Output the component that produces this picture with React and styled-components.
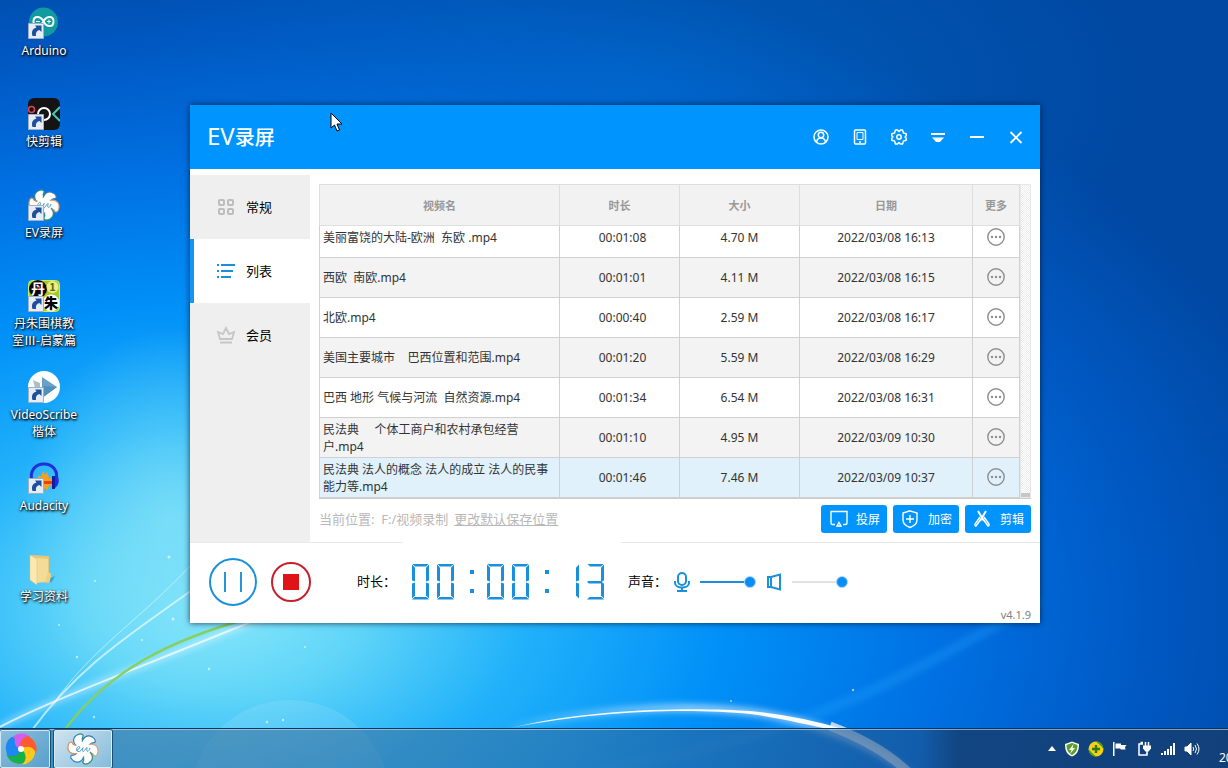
import { useLayoutEffect, useRef } from "react";
import styled, { createGlobalStyle } from "styled-components";

const GlobalStyle = createGlobalStyle`
  * {
    box-sizing: border-box;
  }
  body {
    margin: 0;
    font-family: "Noto Sans", "Noto Sans CJK SC", sans-serif;
    font-size: 12px;
    line-height: 17px;
  }
  button {
    font: inherit;
    padding: 0;
    border: 0;
    background: transparent;
    cursor: pointer;
  }
  svg {
    display: block;
    flex: none;
    text-shadow: none;
  }
`;

//// PLOCHA
const Screen = styled.div`
  position: relative;
  display: flex;
  flex-direction: column;
  min-height: 100vh;
  overflow: hidden;
  background: radial-gradient(
      ellipse 520px 260px at 640px 90px,
      rgba(0, 130, 230, 0.35),
      rgba(0, 130, 230, 0)
    ),
    radial-gradient(
      ellipse 150px 190px at 170px 520px,
      rgba(130, 225, 248, 0.75),
      rgba(130, 225, 248, 0)
    ),
    radial-gradient(
      ellipse 1120px 680px at 220px 610px,
      #84e6fb 0%,
      #62d6f8 12%,
      #22b2fa 27%,
      #0090f8 45%,
      #0070e2 65%,
      #0058c2 83%,
      #0048a2 100%
    );
`;

const Wallpaper = styled.svg`
  position: absolute;
  inset: 0;
  width: 100%;
  height: 100%;
`;

const Desktop = styled.main`
  position: relative;
  flex: 1;
  display: flex;
  align-items: flex-start;
`;

const Shortcuts = styled.nav`
  width: 88px;
  flex: none;
  display: flex;
  flex-direction: column;
`;

const Shortcut = styled.button`
  height: 91px;
  padding-top: 7px;
  display: flex;
  flex-direction: column;
  align-items: center;
  gap: 3px;
  color: white;
  white-space: pre-line;
  text-shadow: 1px 1px 2px black, 0 1px 3px black;
`;

const Cursor = styled.svg`
  position: absolute;
  left: 330px;
  top: 112px;
`;

//// OKNO
const Window = styled.section`
  flex: 1;
  min-width: 700px;
  margin: 105px 188px 105px 102px;
  background: white;
  box-shadow: 0 0 6px rgba(0, 20, 50, 0.8);
`;

const TitleBar = styled.header`
  height: 64px;
  padding: 0 14px 0 17px;
  display: flex;
  align-items: center;
  justify-content: space-between;
  background: #0094ff;
  color: white;
`;

const Title = styled.h1`
  margin: 0;
  font-size: 20px;
  font-weight: 500;
  line-height: 28px;
`;

const TitleLatin = styled.span`
  font-size: 24px;
  font-weight: 400;
`;

const TitleButtons = styled.div`
  display: flex;
  gap: 19px;
`;

const TitleButton = styled.button`
  width: 20px;
  height: 20px;
  display: grid;
  place-items: center;
  color: white;
`;

const Body = styled.div`
  display: flex;
  padding-top: 6px;
`;

const Tabs = styled.nav`
  width: 120px;
  flex: none;
  background: #efefef;
`;

const Tab = styled.button`
  width: 100%;
  height: 64px;
  padding-left: 22px;
  display: flex;
  align-items: center;
  gap: 10px;
  font-size: 13px;
  color: black;
  background: ${(props) => (props.$active ? "white" : "transparent")};
  border-left: 4px solid ${(props) => (props.$active ? "#1296f5" : "transparent")};
`;

const Content = styled.div`
  flex: 1;
  min-width: 0;
  padding: 9px 9px 0;
`;

const TableBox = styled.div`
  display: flex;
  border-bottom: 1px solid #ccc;
`;

const Scroller = styled.div`
  flex: 1;
  height: 314px;
  overflow-y: auto;
  scrollbar-width: none;
`;

const Track = styled.div`
  width: 11px;
  flex: none;
  display: flex;
  align-items: flex-end;
  border: 1px solid #e8e8e8;
  background: repeating-conic-gradient(#ececec 0 25%, white 0 50%) 0 0 / 2px 2px;
`;

const Thumb = styled.div`
  width: 100%;
  height: 4px;
  background: #c6c6c6;
`;

const Table = styled.table`
  width: 100%;
  table-layout: fixed;
  border-spacing: 0;
  color: #333;
`;

const Th = styled.th`
  position: sticky;
  top: 0;
  height: 42px;
  width: ${(props) => props.$width};
  padding: 0;
  font-weight: 700;
  font-size: 11px;
  color: #989898;
  background: #f2f2f2;
  border: solid #dedede;
  border-width: 1px 1px 1px 0;
  &:first-child {
    border-left-width: 1px;
  }
`;

const Row = styled.tr`
  background: ${(props) => (props.$selected ? "#e0f1fb" : "white")};
  &:nth-child(even) {
    background: #f3f3f3;
  }
`;

const Td = styled.td`
  height: 40px;
  padding: 0;
  text-align: center;
  border: solid #d0d0d0;
  border-width: 0 1px 1px 0;
  &:first-child {
    padding: 0 3px;
    text-align: left;
    white-space: pre-wrap;
    border-left-width: 1px;
  }
  &:nth-child(2) {
    padding-left: 6px;
  }
`;

const MoreButton = styled.button`
  display: block;
  margin: 0 auto;
  padding-bottom: 2px;
`;

const Bottom = styled.div`
  height: 43px;
  padding-bottom: 3px;
  display: flex;
  align-items: center;
  gap: 6px;
  font-size: 13px;
  color: #b8b8b8;
`;

const SaveLink = styled.a`
  color: #b8b8b8;
  margin-right: auto;
`;

const ToolButton = styled.button`
  width: 66px;
  height: 28px;
  padding: 0 7px 0 8px;
  display: flex;
  align-items: center;
  justify-content: space-between;
  border-radius: 3px;
  background: #0094ff;
  color: white;
  font-size: 12px;
`;

const Footer = styled.footer`
  height: 81px;
  padding: 0 9px 2px 19px;
  display: flex;
  align-items: center;
  background: linear-gradient(to right, #e8e8e8 212px, white 212px 431px, #e8e8e8 431px) top / 100% 1px
    no-repeat;
`;

const RoundButton = styled.button`
  width: ${(props) => props.$size};
  height: ${(props) => props.$size};
  display: grid;
  place-items: center;
  border: 2px solid ${(props) => props.$color};
  border-radius: 50%;
  margin-right: 14px;
`;

const FooterLabel = styled.span`
  width: ${(props) => props.$width};
  margin-left: ${(props) => props.$left};
  font-size: 13px;
  color: black;
`;

const Timer = styled.div`
  display: grid;
  grid-template-columns: repeat(8, 17px);
  gap: 8px;
`;

// sedmisegmentova cislice
const Digit = styled.div`
  display: grid;
  grid-template-columns: 3px 11px 3px;
  grid-template-rows: 3px 14px 3px 13px 3px;
`;

const areas = {
  a: "1 / 1 / 2 / 4",
  b: "1 / 3 / 4 / 4",
  c: "3 / 3 / 6 / 4",
  d: "5 / 1 / 6 / 4",
  e: "3 / 1 / 6 / 2",
  f: "1 / 1 / 4 / 2",
  g: "3 / 1 / 4 / 4",
};
const clips = {
  a: "0 0, 100% 0, calc(100% - 3px) 100%, 3px 100%",
  b: "100% 1px, 100% calc(100% - 3px), 0 calc(100% - 2px), 0 4px",
  c: "100% 3px, 100% calc(100% - 1px), 0 calc(100% - 4px), 0 2px",
  d: "3px 0, calc(100% - 3px) 0, 100% 100%, 0 100%",
  e: "0 3px, 100% 2px, 100% calc(100% - 4px), 0 calc(100% - 1px)",
  f: "0 1px, 100% 4px, 100% calc(100% - 2px), 0 calc(100% - 3px)",
  g: "2px 0, calc(100% - 3px) 0, calc(100% - 1px) 50%, calc(100% - 3px) 100%, 2px 100%, 0 50%",
};

const Segment = styled.i`
  grid-area: ${(props) => areas[props.$name]};
  clip-path: polygon(${(props) => clips[props.$name]});
  background: #1a90dc;
`;

const Colon = styled.div`
  display: flex;
  flex-direction: column;
  align-items: center;
  justify-content: center;
  gap: 15px;
  padding-left: 3px;
`;

const Dot = styled.i`
  width: 4px;
  height: 4px;
  background: #1a90dc;
`;

const Slider = styled.input`
  appearance: none;
  width: 56px;
  height: 12px;
  margin: 0 ${(props) => (props.$muted ? "0 0 10px" : "10px 0 10px")};
  background: linear-gradient(${(props) => (props.$muted ? "#e2e2e2, #e2e2e2" : "#1a90dc, #1a90dc")})
    center / 100% 2px no-repeat;
  &::-webkit-slider-thumb {
    appearance: none;
    width: 12px;
    height: 12px;
    border: 1px solid #a9d9fb;
    border-radius: 50%;
    background: #0a8cf5;
  }
`;

const Version = styled.span`
  align-self: flex-end;
  margin-left: auto;
  font-size: 11px;
  line-height: 13px;
  color: #808080;
`;

//// HLAVNI PANEL
const Taskbar = styled.footer`
  position: relative;
  height: 40px;
  display: flex;
  align-items: center;
  border-top: 1px solid #10355c;
  box-shadow: inset 0 1px 0 rgba(190, 225, 250, 0.6);
  background: linear-gradient(
    to right,
    rgba(75, 130, 170, 0.7),
    rgba(50, 110, 160, 0.6) 45%,
    rgba(30, 80, 135, 0.6) 75%,
    rgba(22, 60, 108, 0.8) 78%
  );
`;

const TaskButton = styled.button`
  width: ${(props) => props.$width};
  height: 38px;
  margin: 1px 4px 0 0;
  padding-right: ${(props) => props.$shift};
  display: grid;
  place-items: center;
  border: 1px solid rgba(225, 243, 253, 0.85);
  border-radius: 2px;
  box-shadow: 0 0 0 1px rgba(10, 50, 90, 0.7);
  background: linear-gradient(
    135deg,
    rgba(255, 255, 255, ${(props) => (props.$active ? 0.75 : 0.4)}),
    rgba(200, 230, 245, ${(props) => (props.$active ? 0.5 : 0.2)})
  );
`;

const Tray = styled.div`
  margin-left: auto;
  display: flex;
  align-items: center;
  gap: 8px;
  color: white;
`;

const Clock = styled.time`
  width: 9px;
  margin-left: 11px;
  padding-top: 17px;
  overflow: hidden;
  color: white;
`;

//// IKONY
const ShortcutArrow = () => (
  <g>
    <path d="M.5 16.5h15v15H.5z" fill="#e6edf4" stroke="#9fb0c0" />
    <path d="M4.500 29c-1.500-5 .5-7.500 4-8.500L7 18.500h6.500V25l-2-2c-3 .5-4 2.500-3.500 6z" fill="#1d4f9c" />
  </g>
);

const ArduinoIcon = () => (
  <svg width="32" height="32" viewBox="0 0 32 32">
    <circle cx="15.500" cy="15" r="14.500" fill="#129aa0" />
    <path
      d="M15.500 14.500c-3-6-10-6-10 0s7 6 10 0 10-6 10 0-7 6-10 0z"
      fill="none"
      stroke="#f2ffff"
      strokeWidth="2"
    />
    <path d="M19 14.500h4M21 12.500v4M8 14.500h4" stroke="#f2ffff" />
    <ShortcutArrow />
  </svg>
);

const KuaiIcon = () => (
  <svg width="32" height="32" viewBox="0 0 32 32">
    <rect width="32" height="32" rx="6" fill="#141414" />
    <circle cx="3.500" cy="11.500" r="3" fill="none" stroke="#e0405c" strokeWidth="1.500" />
    <circle cx="16" cy="16" r="6" fill="none" stroke="white" strokeWidth="2" />
    <path d="M32 9l-7 7 7 7" fill="none" stroke="#46c8b4" strokeWidth="2" />
    <ShortcutArrow />
  </svg>
);

const petals = ["#2a8a9a", "#2a79ad", "#d9a47c", "#2f8f73", "#2f86c8", "#cf9160"];

const EvFlower = ({ size = 32, children }) => (
  <svg width={size} height={size} viewBox="0 0 32 32">
    {petals.map((color, i) => (
      <path
        key={color}
        d="M13 14C8 7 11 1 17 .8c5 0 6 3 3.500 4.500-2 1.500-1.500 4-1.500 7"
        transform={`rotate(${i * 60 - 25} 16 16)`}
        fill="white"
        stroke={color}
        strokeWidth="1.200"
      />
    ))}
    <circle cx="16" cy="16" r="7.500" fill="white" />
    <path
      d="M9 17c3 0 5-3 3-3.500S8.500 18 11 18.500s4-2 5-4c0 2-1 3 0 4s3-4 4-4-1 2 0 3.500 2.500-1 3-3"
      fill="none"
      stroke="#4a9ccc"
    />
    {children}
  </svg>
);

const glyphFont = '"Noto Sans CJK SC", sans-serif';

const GoIcon = () => (
  <svg width="32" height="32" viewBox="0 0 32 32">
    <rect x=".5" y=".5" width="31" height="31" rx="4" fill="#a8c928" stroke="#c8f060" />
    <circle cx="10" cy="9" r="9" fill="#0a0a0a" />
    <circle cx="24.500" cy="7" r="6" fill="#e8f08a" />
    <circle cx="23" cy="23" r="8.500" fill="white" />
    <text x="10" y="14" textAnchor="middle" fontSize="14" fontWeight="700" fontFamily={glyphFont} fill="white">
      丹
    </text>
    <circle cx="10" cy="8" r="1.500" fill="#e02020" />
    <text x="24.500" y="11" textAnchor="middle" fontSize="11" fontWeight="700" fontFamily={glyphFont} fill="#5a6a10">
      1
    </text>
    <text x="23" y="28" textAnchor="middle" fontSize="14" fontWeight="900" fontFamily={glyphFont} fill="black">
      朱
    </text>
    <ShortcutArrow />
  </svg>
);

const ScribeIcon = () => (
  <svg width="32" height="32" viewBox="0 0 32 32">
    <circle cx="16" cy="16" r="16" fill="white" />
    <path d="M5 9l7 3v9H8z" fill="#aebfca" />
    <path d="M14 6l15 10-15 11z" fill="#68a2c8" />
    <path d="M14 15l15 1-15 11z" fill="#4f8fbb" />
    <ShortcutArrow />
  </svg>
);

const AudacityIcon = () => (
  <svg width="32" height="32" viewBox="0 0 32 32">
    <path d="M9 18l2-5 2 2 2-6 2 4 2-3 2 6 3 1v6l-3 1-2 5-2-3-2 4-3-5-3-2z" fill="#f6a01c" />
    <path d="M9 19h16v3H9z" fill="#e8401c" />
    <path d="M4 20C1 8 8 2 16 2s15 6 12 18" fill="none" stroke="#2030d8" strokeWidth="3" />
    <path d="M24 14h3v13h-3z" fill="#101c9c" />
    <path d="M27 12c5 2 5 11 0 14z" fill="#1c2cf0" />
    <ShortcutArrow />
  </svg>
);

const FolderIcon = () => (
  <svg width="32" height="32" viewBox="0 0 32 32">
    <path d="M21 26l6-3-4 7z" fill="#2a6a94" opacity=".5" />
    <path d="M3 2l18 1v16l2 2-2 9-13-1z" fill="#e8c878" />
    <path d="M9 5l11 1v22L9 30z" fill="#f4dc98" />
    <path d="M2 2l7 4v26l-7-5z" fill="#fbeab0" stroke="#dcbc70" strokeWidth=".5" />
    <path d="M20 19l3 2-1 7-5 1z" fill="#efcf80" />
  </svg>
);

const UserIcon = () => (
  <svg width="16" height="16" viewBox="0 0 16 16" fill="none" stroke="currentColor" strokeWidth="1.500">
    <circle cx="8" cy="8" r="7" />
    <circle cx="8" cy="6" r="2.700" />
    <path d="M3.500 13c.5-3 2-4 4.500-4s4 1 4.500 4" />
  </svg>
);

const PhoneIcon = () => (
  <svg width="16" height="16" viewBox="0 0 16 16" fill="none" stroke="currentColor" strokeWidth="1.500">
    <rect x="2.500" y="1" width="11" height="14" rx="1" />
    <path d="M5 3.500h6v7H5z" strokeWidth="1" />
    <path d="M7 13h2" />
  </svg>
);

const GearIcon = () => (
  <svg width="16" height="16" viewBox="0 0 16 16" fill="none" stroke="currentColor" strokeWidth="1.500">
    <path
      d="M4.500 1h2L8 2.500 9.500 1h2l1 3 2.700.8V7L14 8l1.200 1v2.200l-2.700.8-1 3h-2L8 13.500 6.500 15h-2l-1-3-2.700-.8V9L2 8 .8 7V4.800L3.500 4z"
      strokeLinejoin="round"
    />
    <circle cx="8" cy="8" r="2.200" />
  </svg>
);

const MenuIcon = () => (
  <svg width="16" height="16" viewBox="0 0 16 16" fill="currentColor">
    <path d="M1 4h14v2H1zM2 8.500h12L10 13H6z" />
  </svg>
);

const MinIcon = () => (
  <svg width="16" height="16" viewBox="0 0 16 16" fill="currentColor">
    <path d="M1 7h14v2H1z" />
  </svg>
);

const CloseIcon = () => (
  <svg width="16" height="16" viewBox="0 0 16 16" fill="none" stroke="currentColor" strokeWidth="1.800">
    <path d="M2.500 3l11 11M13.500 3l-11 11" />
  </svg>
);

const GridIcon = () => (
  <svg width="20" height="20" viewBox="0 0 20 20" fill="none" stroke="#bdbdbd" strokeWidth="2">
    <rect x="3" y="3" width="5" height="5" rx="1" />
    <rect x="12" y="3" width="5" height="5" rx="1" />
    <rect x="3" y="12" width="5" height="5" rx="1" />
    <rect x="12" y="12" width="5" height="5" rx="1" />
  </svg>
);

const ListIcon = () => (
  <svg width="20" height="20" viewBox="0 0 20 20" fill="none" stroke="#1a90dc" strokeWidth="2">
    <path d="M1 4h2M5 4h14M1 10h2M5 10h12M1 16h2M5 16h10" />
  </svg>
);

const CrownIcon = () => (
  <svg width="20" height="20" viewBox="0 0 20 20" fill="none" stroke="#c6c6c6" strokeWidth="1.800">
    <path d="M4 14L2 7l5 2 3-6 3 6 5-2-2 7zM4 17.500h12" />
  </svg>
);

const MoreIcon = () => (
  <svg width="18" height="18" viewBox="0 0 18 18" fill="#8e8e8e">
    <circle cx="9" cy="9" r="8.200" fill="none" stroke="#8e8e8e" strokeWidth="1.400" />
    <circle cx="5" cy="9" r="1.200" />
    <circle cx="9" cy="9" r="1.200" />
    <circle cx="13" cy="9" r="1.200" />
  </svg>
);

const CastIcon = () => (
  <svg width="20" height="20" viewBox="0 0 20 20" fill="none" stroke="currentColor" strokeWidth="1.400">
    <path d="M6 15.500H3.500Q2 15.500 2 14V2.500h16V14q0 1.500-1.500 1.500H14" />
    <path d="M10 13.500l2 3.500H8z" />
  </svg>
);

const LockIcon = () => (
  <svg width="20" height="20" viewBox="0 0 20 20" fill="none" stroke="currentColor" strokeWidth="1.400">
    <path d="M9 1.800L16 4v7c0 4-3 6-7 7.500C5 17 2 15 2 11V4zM9 6v8M5 10h8" />
  </svg>
);

const CutIcon = () => (
  <svg width="20" height="20" viewBox="0 0 20 20" fill="none" stroke="currentColor" strokeWidth="1.400">
    <path d="M5 2l6 10M13 2L7 12" strokeWidth="2" />
    <path d="M8 10l-5 7q-1.500 0-1-2l5-7M10 10l5 7q1.500 0 1-2l-5-7" />
  </svg>
);

const PauseIcon = () => (
  <svg width="20" height="20" viewBox="0 0 20 20" stroke="#2a94d8" strokeWidth="2">
    <path d="M2 0v20M18 0v20" />
  </svg>
);

const StopIcon = () => (
  <svg width="16" height="16" viewBox="0 0 16 16">
    <path d="M0 0h16v16H0z" fill="#e01414" />
  </svg>
);

const MicIcon = () => (
  <svg width="16" height="20" viewBox="0 0 16 20" fill="none" stroke="#1a90dc" strokeWidth="2">
    <rect x="4" y="1" width="8" height="12" rx="4" />
    <path d="M1 9v2c0 6 14 6 14 0V9M8 15v4M3 19h10" />
  </svg>
);

const HornIcon = () => (
  <svg width="16" height="18" viewBox="0 0 16 18" fill="none" stroke="#1a90dc" strokeWidth="2">
    <path d="M2 4h3v10H2zM5 4l9-2.500v15L5 14" />
  </svg>
);

const wheel = ["#d65cf0", "#ff5a30", "#ffc81c", "#18b048", "#1c88f0"];

const WheelIcon = () => (
  <svg width="32" height="32" viewBox="0 0 32 32">
    {wheel.map((color, i) => (
      <path
        key={color}
        d="M16 16C10 16 5 10 7 4.500 12 0 20-1 25 3.500c1.500 2 .5 4-2 4.500-5 1-7 3.500-7 8z"
        transform={`rotate(${i * 72 - 5} 16 16)`}
        fill={color}
      />
    ))}
    <circle cx="16" cy="16" r="3" fill="white" />
  </svg>
);

const UpIcon = () => (
  <svg width="8" height="5" viewBox="0 0 8 5">
    <path d="M4 0l4 5H0z" fill="white" />
  </svg>
);

const ShieldIcon = () => (
  <svg width="16" height="16" viewBox="0 0 16 16">
    <path d="M8 .5L15 3c0 7-2 10.500-7 12.500C3 13.500 1 10 1 3z" fill="white" />
    <path d="M8 2l5.500 2c0 5-2 8.500-5.500 10C4.500 12.500 2.500 9 2.500 4z" fill="#5aa028" />
    <path d="M9.500 3L5 9h2.500L6 13l5-6H8.500z" fill="white" />
  </svg>
);

const PlusIcon = () => (
  <svg width="16" height="16" viewBox="0 0 16 16">
    <circle cx="8" cy="8" r="7.500" fill="#f8d010" />
    <path d="M8 .5A7.500 7.500 0 0 1 15.500 8L13 5zM8 15.500A7.500 7.500 0 0 1 .5 8L4 12z" fill="#3f9a28" />
    <path d="M8 4v8M4 8h8" stroke="#2c7a1c" strokeWidth="2.500" />
  </svg>
);

const FlagIcon = () => (
  <svg width="16" height="16" viewBox="0 0 16 16" fill="white">
    <path d="M1 1h1.500v14H1zM3.500 2.500H9V4h5.500l-1.500 2 .5 2.500H9L8 7.500H3.500z" />
  </svg>
);

const PlugIcon = () => (
  <svg width="16" height="16" viewBox="0 0 16 16" fill="none" stroke="white" strokeWidth="1.500">
    <path d="M7 3H3v11h8v-2M4.500 1.500H7" />
    <path d="M7 4.500h8v3l-2.500 3h-3L7 7.500z" fill="white" stroke="none" />
    <path d="M9.500 1v4M12.500 1v4M11 10v3" />
  </svg>
);

const SignalIcon = () => (
  <svg width="16" height="16" viewBox="0 0 16 16" stroke="white" strokeWidth="2">
    <path d="M2 14v-2M5 14v-4M8 14V8M11 14V5M14 14V2" />
  </svg>
);

const VolumeIcon = () => (
  <svg width="16" height="16" viewBox="0 0 16 16" fill="none" stroke="white">
    <path d="M1 6h2l4-4v12l-4-4H1z" fill="white" />
    <path d="M9 6q1.500 2 0 4M11 4q3 4 0 8M13 2.500q4 5.500 0 11" />
  </svg>
);

//// DATA
const shortcuts = [
  { name: "Arduino", icon: <ArduinoIcon /> },
  { name: "快剪辑", icon: <KuaiIcon /> },
  {
    name: "EV录屏",
    icon: (
      <EvFlower>
        <ShortcutArrow />
      </EvFlower>
    ),
  },
  { name: "丹朱围棋教\n室Ⅲ-启蒙篇", icon: <GoIcon /> },
  { name: "VideoScribe\n楷体", icon: <ScribeIcon /> },
  { name: "Audacity", icon: <AudacityIcon /> },
  { name: "学习资料", icon: <FolderIcon /> },
];

const titleButtons = [
  { label: "账号", icon: <UserIcon /> },
  { label: "手机", icon: <PhoneIcon /> },
  { label: "设置", icon: <GearIcon /> },
  { label: "菜单", icon: <MenuIcon /> },
  { label: "最小化", icon: <MinIcon /> },
  { label: "关闭", icon: <CloseIcon /> },
];

const tabs = [
  { name: "常规", icon: <GridIcon /> },
  { name: "列表", icon: <ListIcon />, active: true },
  { name: "会员", icon: <CrownIcon /> },
];

const columns = [
  { name: "视频名", width: "auto" },
  { name: "时长", width: "120px" },
  { name: "大小", width: "120px" },
  { name: "日期", width: "173px" },
  { name: "更多", width: "47px" },
];

const videos = [
  ["美丽富饶的大陆-欧洲  东欧 .mp4", "00:01:08", "4.70 M", "2022/03/08 16:13"],
  ["西欧  南欧.mp4", "00:01:01", "4.11 M", "2022/03/08 16:15"],
  ["北欧.mp4", "00:00:40", "2.59 M", "2022/03/08 16:17"],
  ["美国主要城市    巴西位置和范围.mp4", "00:01:20", "5.59 M", "2022/03/08 16:29"],
  ["巴西 地形 气候与河流  自然资源.mp4", "00:01:34", "6.54 M", "2022/03/08 16:31"],
  ["民法典     个体工商户和农村承包经营户.mp4", "00:01:10", "4.95 M", "2022/03/09 10:30"],
  ["民法典 法人的概念 法人的成立 法人的民事能力等.mp4", "00:01:46", "7.46 M", "2022/03/09 10:37"],
];

const tools = [
  { name: "投屏", icon: <CastIcon /> },
  { name: "加密", icon: <LockIcon /> },
  { name: "剪辑", icon: <CutIcon /> },
];

const lit = { 0: "abcdef", 1: "bc", 3: "abcdg" };

const stars = [
  [169, 557, 1.5],
  [173, 619, 1.5],
  [77, 657, 1.2],
  [95, 581, 1],
  [142, 640, 1],
  [59, 625, 1],
  [209, 669, 1.2],
  [305, 647, 1],
  [94, 717, 1.2],
  [267, 722, 1.2],
  [283, 720, 1.2],
  [853, 690, 1.2],
  [731, 701, 1],
];

const VideoList = () => {
  const scroller = useRef(null);

  // seznam je odrolovany na posledni nahravku
  useLayoutEffect(() => {
    scroller.current.scrollTop = scroller.current.scrollHeight;
  }, []);

  return (
    <TableBox>
      <Scroller ref={scroller}>
        <Table>
          <thead>
            <tr>
              {columns.map((column) => (
                <Th key={column.name} $width={column.width}>
                  {column.name}
                </Th>
              ))}
            </tr>
          </thead>
          <tbody>
            {videos.map((video, i) => (
              <Row key={video[0]} $selected={i === videos.length - 1}>
                {video.map((cell) => (
                  <Td key={cell}>{cell}</Td>
                ))}
                <Td>
                  <MoreButton aria-label="更多">
                    <MoreIcon />
                  </MoreButton>
                </Td>
              </Row>
            ))}
          </tbody>
        </Table>
      </Scroller>
      <Track>
        <Thumb />
      </Track>
    </TableBox>
  );
};

const SegmentTimer = ({ value }) => (
  <Timer role="timer" aria-label={value}>
    {value.split("").map((char, i) =>
      char === ":" ? (
        <Colon key={i}>
          <Dot />
          <Dot />
        </Colon>
      ) : (
        <Digit key={i}>
          {lit[char].split("").map((name) => (
            <Segment key={name} $name={name} />
          ))}
        </Digit>
      )
    )}
  </Timer>
);

const Backdrop = () => (
  <Wallpaper viewBox="0 0 1228 768" preserveAspectRatio="none" aria-hidden="true">
    <defs>
      <filter id="soft" x="-20%" y="-20%" width="140%" height="140%">
        <feGaussianBlur stdDeviation="3" />
      </filter>
      <linearGradient id="arc" x1="0" x2="1">
        <stop offset="0" stopColor="white" stopOpacity=".1" />
        <stop offset=".45" stopColor="white" stopOpacity=".9" />
        <stop offset="1" stopColor="white" stopOpacity=".8" />
      </linearGradient>
    </defs>
    <path d="M600 768C800 740 900 680 1040 600" fill="none" stroke="#2aa4ff" strokeWidth="10" opacity=".3" filter="url(#soft)" />
    <circle cx="290" cy="800" r="100" fill="white" opacity=".1" />
    <path d="M0 727C50 700 160 660 260 618" fill="none" stroke="white" strokeWidth="7" opacity=".35" filter="url(#soft)" />
    <path d="M0 727C50 700 160 660 260 618" fill="none" stroke="white" strokeWidth="2" opacity=".7" />
    <path d="M32 730C80 665 130 635 192 590" fill="none" stroke="white" strokeWidth="2" opacity=".6" />
    <path d="M55 702C90 650 140 620 192 564" fill="none" stroke="white" opacity=".5" />
    <path d="M66 728C110 670 170 640 250 618" fill="none" stroke="#86cf60" strokeWidth="2.500" />
    <path d="M510 728C610 704 700 706 750 712C800 718 870 740 910 775" fill="none" stroke="url(#arc)" strokeWidth="8" opacity=".6" filter="url(#soft)" />
    <path d="M830 726Q880 745 908 772" fill="none" stroke="white" strokeWidth="9" opacity=".7" />
    <path d="M510 728C600 706 710 708 750 711Q800 716 842 729L828 729Q770 716 750 714C690 708 600 710 510 728" fill="white" opacity=".95" />
    {stars.map(([x, y, r]) => (
      <circle key={x} cx={x} cy={y} r={r} fill="white" opacity=".6" />
    ))}
  </Wallpaper>
);

export default function App() {
  return (
    <Screen>
      <GlobalStyle />
      <Backdrop />
      <Desktop>
        <Shortcuts>
          {shortcuts.map((item) => (
            <Shortcut key={item.name}>
              {item.icon}
              {item.name}
            </Shortcut>
          ))}
        </Shortcuts>

        <Window>
          <TitleBar>
            <Title>
              <TitleLatin>EV</TitleLatin>录屏
            </Title>
            <TitleButtons>
              {titleButtons.map((button) => (
                <TitleButton key={button.label} aria-label={button.label}>
                  {button.icon}
                </TitleButton>
              ))}
            </TitleButtons>
          </TitleBar>

          <Body>
            <Tabs>
              {tabs.map((tab) => (
                <Tab key={tab.name} $active={tab.active}>
                  {tab.icon}
                  {tab.name}
                </Tab>
              ))}
            </Tabs>
            <Content>
              <VideoList />
              <Bottom>
                <span>当前位置:&nbsp; F:/视频录制</span>
                <SaveLink href="#save">更改默认保存位置</SaveLink>
                {tools.map((tool) => (
                  <ToolButton key={tool.name}>
                    {tool.icon}
                    {tool.name}
                  </ToolButton>
                ))}
              </Bottom>
            </Content>
          </Body>

          <Footer>
            <RoundButton $size="48px" $color="#1a90dc" aria-label="暂停">
              <PauseIcon />
            </RoundButton>
            <RoundButton $size="40px" $color="#c4202c" aria-label="停止">
              <StopIcon />
            </RoundButton>
            <FooterLabel $left="32px" $width="55px">
              时长：
            </FooterLabel>
            <SegmentTimer value="00:00:13" />
            <FooterLabel $left="24px" $width="46px">
              声音：
            </FooterLabel>
            <MicIcon />
            <Slider type="range" aria-label="麦克风" defaultValue={100} />
            <HornIcon />
            <Slider type="range" aria-label="扬声器" defaultValue={100} $muted />
            <Version>v4.1.9</Version>
          </Footer>
        </Window>
        <Cursor width="13" height="20" viewBox="0 0 13 20">
          <path d="M1 1v15l3.500-3L7 19l2.500-1L7 12h5z" fill="white" stroke="black" />
        </Cursor>
      </Desktop>

      <Taskbar>
        <TaskButton $width="50px" $shift="8px" aria-label="浏览器">
          <WheelIcon />
        </TaskButton>
        <TaskButton $width="58px" $active aria-label="EV录屏">
          <EvFlower size={32} />
        </TaskButton>
        <Tray>
          <UpIcon />
          <ShieldIcon />
          <PlusIcon />
          <FlagIcon />
          <PlugIcon />
          <SignalIcon />
          <VolumeIcon />
          <Clock>20</Clock>
        </Tray>
      </Taskbar>
    </Screen>
  );
}
